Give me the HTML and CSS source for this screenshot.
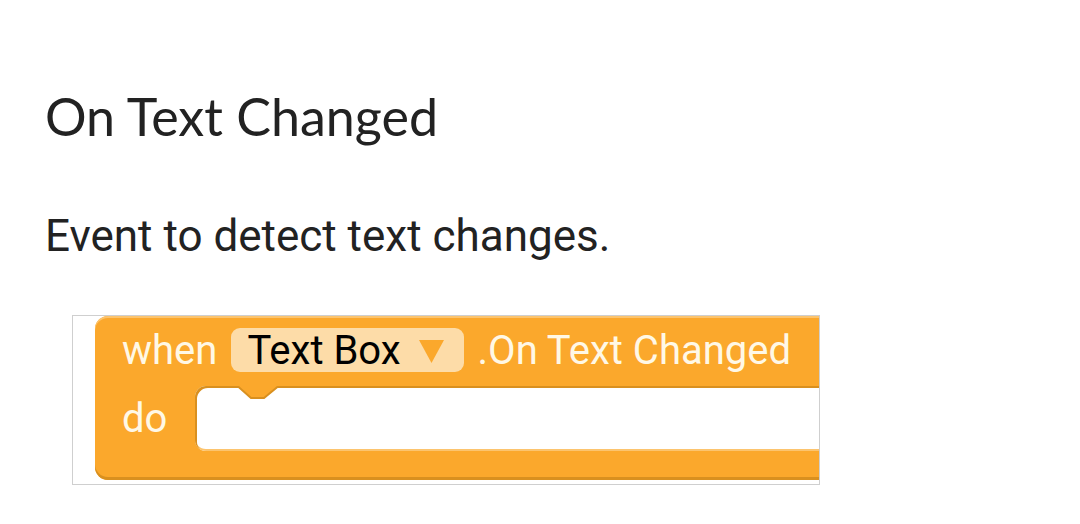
FILE: index.html
```html
<!DOCTYPE html>
<html lang="en">
<head>
<meta charset="utf-8">
<title>On Text Changed</title>
<link rel="stylesheet" href="styles.css">
</head>
<body>
<main class="page">
  <h2 class="title">On Text Changed</h2>
  <p class="desc">Event to detect text changes.</p>
  <div class="frame">
    <div class="block">
      <div class="row-top">
        <span class="label">when</span>
        <span class="pill">Text Box <svg class="arrow" width="25" height="23" viewBox="0 0 25 23"><path d="M0 0 H25 L12.5 23 Z" fill="#fba82c"/></svg></span>
        <span class="label">.On Text Changed</span>
      </div>
      <div class="row-mid">
        <span class="label do">do</span>
        <div class="slot">
          <svg class="notch" width="42" height="14" viewBox="0 0 42 14"><path d="M0 0 L13 12 L26 12 L40 0 Z" fill="#fba82c"/><path d="M0 0.5 L13 12 L26 12 L40 0.5" fill="none" stroke="#d9901f" stroke-width="2"/></svg>
        </div>
      </div>
      <div class="row-bottom"></div>
    </div>
  </div>
</main>
</body>
</html>
```

FILE: styles.css
```css
html, body {
  margin: 0;
  padding: 0;
  background: #ffffff;
}
.page {
  padding: 84px 0 0 45px;
}
.title {
  margin: 0;
  font-family: "Lato", "DejaVu Sans", sans-serif;
  font-weight: 400;
  font-size: 52px;
  line-height: 64px;
  color: #222222;
}
.desc {
  margin: 63px 0 0 0;
  font-family: "Roboto", "Liberation Sans", sans-serif;
  font-size: 44px;
  line-height: 50px;
  color: #222222;
}
.frame {
  margin: 54px 0 0 27px;
  width: 748px;
  height: 170px;
  border: 1px solid #cfcfcf;
  overflow: hidden;
  box-sizing: border-box;
  padding: 0 0 0 22px;
}
.block {
  width: 820px;
  height: 164px;
  display: flex;
  flex-direction: column;
  background: #fba82c;
  border-radius: 13px 0 0 13px;
  box-shadow: inset 0 2px 0 #fcc46e, inset 0 -3px 0 #d9901f;
  font-family: "Roboto", "Liberation Sans", sans-serif;
  font-size: 40px;
}
.row-top {
  height: 70px;
  display: flex;
  align-items: center;
  padding-left: 27px;
  padding-bottom: 2px;
  box-sizing: border-box;
  gap: 14px;
}
.label {
  color: #fff8e6;
}
.pill {
  display: flex;
  align-items: center;
  height: 44px;
  padding: 0 20px 0 16px;
  background: #fddca8;
  border-radius: 9px;
  color: #000000;
  gap: 18px;
}
.arrow {
  display: block;
  margin-top: 2px;
}
.row-mid {
  display: flex;
  height: 65px;
}
.do {
  width: 73px;
  padding-left: 27px;
  display: flex;
  align-items: center;
}
.slot {
  position: relative;
  flex: 1;
  background: #ffffff;
  border-radius: 11px 0 0 11px;
  box-shadow: inset 2px 2px 0 #d9901f, inset 0 -2px 0 #fcc46e;
}
.notch {
  position: absolute;
  left: 43px;
  top: 0;
}
.row-bottom {
  flex: 1;
}
```
